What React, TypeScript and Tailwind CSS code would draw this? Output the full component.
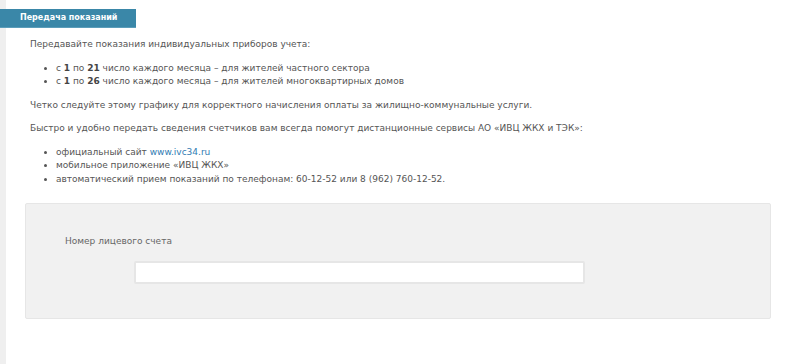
export default function App() {
  return (
    <div className="flex min-h-[364px] w-[800px] bg-white font-['DejaVu_Sans',sans-serif] text-[#555]">
      <div className="w-[6px] shrink-0 bg-[#efefef]" />
      <div className="flex-1 pt-[9px]">
        <div className="-ml-[6px] flex h-[19px] w-[136px] items-center border-b border-[#5b9dba] bg-[#3a87a8] pl-[20px] text-[8px] font-bold text-white">
          Передача показаний
        </div>

        <div className="pl-[24px] pr-[20px] text-[9px] leading-[13.5px]">
          <p className="mt-[10px]">Передавайте показания индивидуальных приборов учета:</p>
          <ul className="mt-[10px] list-disc pl-[26px]">
            <li>с <b className="font-semibold text-[#444]">1</b> по <b className="font-semibold text-[#444]">21</b> число каждого месяца – для жителей частного сектора</li>
            <li>с <b className="font-semibold text-[#444]">1</b> по <b className="font-semibold text-[#444]">26</b> число каждого месяца – для жителей многоквартирных домов</li>
          </ul>
          <p className="mt-[10px]">Четко следуйте этому графику для корректного начисления оплаты за жилищно-коммунальные услуги.</p>
          <p className="mt-[10px]">Быстро и удобно передать сведения счетчиков вам всегда помогут дистанционные сервисы АО «ИВЦ ЖКХ и ТЭК»:</p>
          <ul className="mt-[10px] list-disc pl-[26px]">
            <li>официальный сайт <a className="text-[#2f7cb3]">www.ivc34.ru</a></li>
            <li>мобильное приложение «ИВЦ ЖКХ»</li>
            <li>автоматический прием показаний по телефонам: 60-12-52 или 8 (962) 760-12-52.</li>
          </ul>
        </div>

        <div className="ml-[19px] mr-[29px] mt-[17px] h-[116px] rounded-[2px] border border-[#e6e6e6] bg-[#f1f1f1] pl-[39px] pt-[31px]">
          <div className="text-[9px] text-[#666]">Номер лицевого счета</div>
          <div className="ml-[69px] mt-[12px] h-[23px] w-[451px] rounded-[2px] border-2 border-[#e6e6e6] bg-white" />
        </div>
      </div>
    </div>
  );
}
